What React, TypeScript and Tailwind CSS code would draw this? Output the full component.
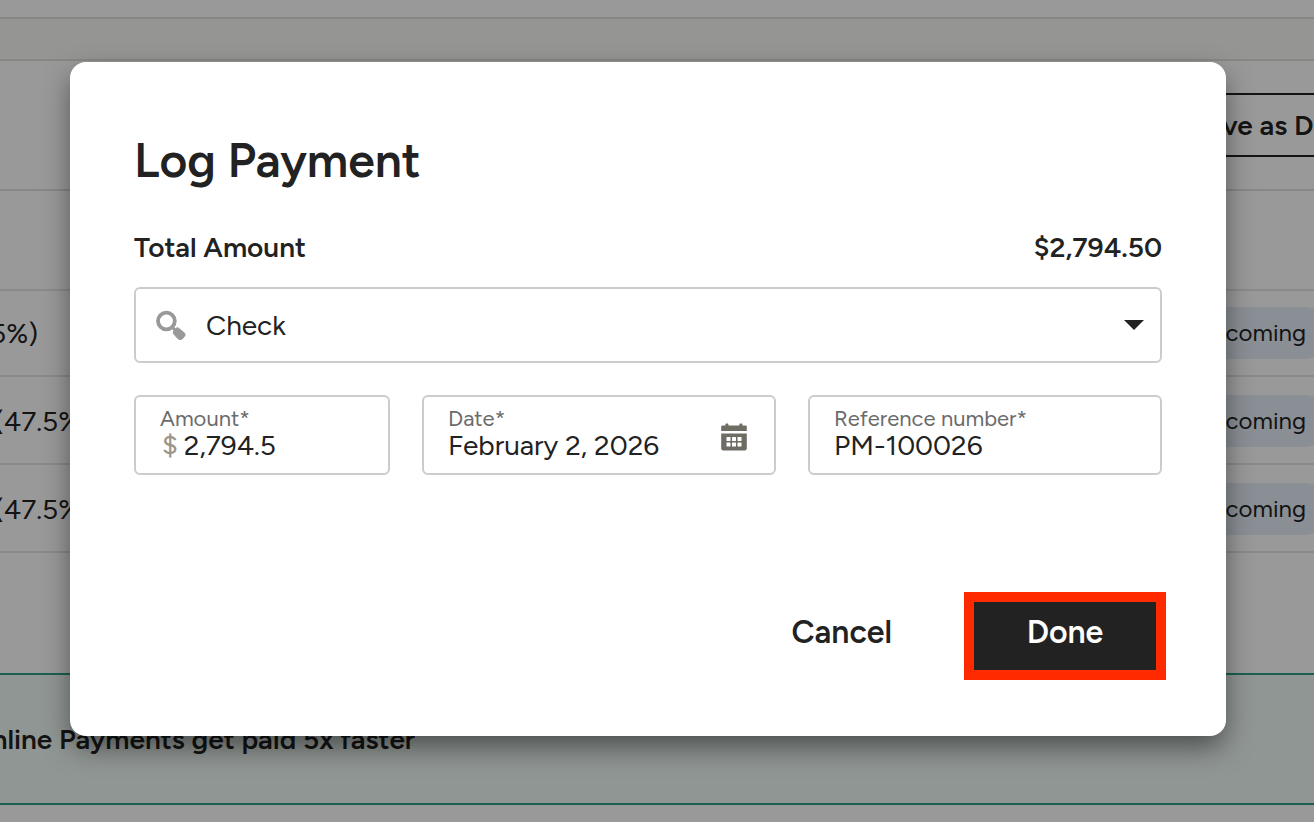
import type { ReactNode } from 'react';

const schedule = [
  { share: '(5%)', row: 'h-[86px]', cell: 'w-[38px]' },
  { share: '(47.5%)', row: 'h-[88px] pt-0.5', cell: 'w-[90px]' },
  { share: '(47.5%)', row: 'h-[88px] pt-0.5', cell: 'w-[90px]' },
];

function InvoicePage() {
  return (
    <div aria-hidden="true" className="flex h-full flex-col overflow-hidden bg-white text-[28px] leading-9 text-[#222222]">
      <div className="h-[19px] shrink-0 border-b-2 border-[#e2e1dd]" />
      <div className="h-[42px] shrink-0 border-b-2 border-[#e2e1dd] bg-[#f9f9f5]" />
      <div className="flex h-[130px] shrink-0 items-center justify-end border-b-2 border-[#e2e1dd]">
        <button type="button" tabIndex={-1} className="-mr-20 h-16 border-2 border-[#222222] px-8 font-semibold whitespace-nowrap">
          Save as Draft
        </button>
      </div>
      <div className="h-[100px] shrink-0 border-b-2 border-[#e6e6e3]" />
      {schedule.map(({ share, row, cell }, i) => (
        <div key={i} className={`flex shrink-0 items-center justify-between border-b-2 border-[#e6e6e3] ${row}`}>
          <span className={`flex justify-end ${cell}`}>{share}</span>
          <span className="-mr-4 flex h-[52px] items-center rounded-full bg-[#e7eef8] px-6 text-2xl">Upcoming</span>
        </div>
      ))}
      <div className="h-[120px] shrink-0" />
      <div className="flex h-[132px] shrink-0 items-center border-y-2 border-[#2f9f86] bg-[#f0fbf6] font-semibold">
        <span className="flex w-[415px] justify-end whitespace-nowrap">Online Payments get paid 5x faster</span>
      </div>
    </div>
  );
}

function Field({ id, label, value, prefix, icon }: { id: string; label: string; value: string; prefix?: string; icon?: ReactNode }) {
  return (
    <div className="flex h-20 items-center rounded-md border-2 border-[#cccccc] px-6">
      <div className="flex min-w-0 flex-1 flex-col pb-1">
        <label htmlFor={id} className="text-[22px] leading-6 text-[#6b6b6b]">{label}</label>
        <div className="flex h-7 items-center text-[28px] leading-7">
          {prefix && <span className="mr-1.5 pl-0.5 text-[#9b9587]">{prefix}</span>}
          <input id={id} defaultValue={value} className="h-9 w-full min-w-0 bg-transparent text-[#222222] outline-none" />
        </div>
      </div>
      {icon}
    </div>
  );
}

function SearchIcon() {
  return (
    <svg viewBox="0 0 32 32" className="pointer-events-none absolute left-5 h-8 w-8" aria-hidden="true">
      <circle cx="12.4" cy="12" r="8.4" fill="none" stroke="#999999" strokeWidth="3.8" />
      <path d="M18 18L21.500 21.500" stroke="#999999" strokeWidth="3" />
      <path d="M19.400 22.200l3.400-3.400 1.500.2 6.400 5.200.3 2.400-2.800 3.400-2.200.6-2-.8-4.600-5.200z" fill="#999999" stroke="#999999" strokeLinejoin="round" />
    </svg>
  );
}

function CalendarIcon() {
  return (
    <svg viewBox="0 0 26 28" className="mt-1 mr-[3px] h-7 w-[26px] shrink-0" aria-hidden="true">
      <path fill="#6f6c64" d="M1.5 2.5H4.4V1.2Q4.4.4 5.2.4h1.4q.8 0 .8.8v1.3h11V1.2q0-.8.8-.8h1.4q.8 0 .8.8v1.3h3.1q1.3 0 1.3 1.3V8H.2V3.8q0-1.3 1.3-1.3z" />
      <path fill="#6f6c64" d="M.2 10.6h25.6v15q0 1.8-1.8 1.8H2Q.2 27.400.2 25.600z" />
      <g fill="#ffffff">
        <rect x="5.500" y="14" width="4" height="4" rx=".5" />
        <rect x="11" y="14" width="4" height="4" rx=".5" />
        <rect x="16.500" y="14" width="4" height="4" rx=".5" />
        <rect x="5.500" y="19.500" width="4" height="4" rx=".5" />
        <rect x="11" y="19.500" width="4" height="4" rx=".5" />
        <rect x="16.500" y="19.500" width="4" height="4" rx=".5" />
      </g>
    </svg>
  );
}

export default function App() {
  return (
    <div className="relative h-screen overflow-hidden font-['Figtree','Lato',sans-serif]">
      <InvoicePage />
      <div className="absolute inset-0 bg-black/40 pt-[62px] pr-[88px] pl-[70px]">
        <section
          role="dialog"
          aria-modal="true"
          aria-labelledby="dialog-title"
          className="rounded-2xl bg-white px-16 pt-[70px] pb-14 text-[#222222] shadow-[0_12px_28px_-2px_rgba(0,0,0,0.5)]"
        >
          <h1 id="dialog-title" className="text-5xl leading-[56px] font-semibold">Log Payment</h1>
          <div className="mt-[41px] flex justify-between text-[28px] leading-9 font-semibold">
            <span>Total Amount</span>
            <span>$2,794.50</span>
          </div>
          <form onSubmit={(e) => e.preventDefault()}>
            <div className="relative mt-[22px] flex items-center">
              <SearchIcon />
              <select aria-label="Payment method" className="h-[76px] w-full appearance-none rounded-md border-2 border-[#cccccc] bg-transparent pr-14 pl-[70px] text-[28px]">
                <option>Check</option>
              </select>
              <svg viewBox="0 0 20 10" className="pointer-events-none absolute right-[18px] h-2.5 w-5" aria-hidden="true">
                <path d="M0 0h20L10 10z" fill="#222222" />
              </svg>
            </div>
            <div className="mt-8 grid grid-cols-[256px_1fr_1fr] gap-8">
              <Field id="amount" label="Amount*" value="2,794.5" prefix="$" />
              <Field id="date" label="Date*" value="February 2, 2026" icon={<CalendarIcon />} />
              <Field id="reference" label="Reference number*" value="PM-100026" />
            </div>
            <div className="-mr-1 mt-[117px] flex items-center justify-end gap-[72px] text-[32px] font-semibold">
              <button type="button" className="pb-2">Cancel</button>
              <button type="submit" className="h-[88px] w-[202px] border-[10px] border-[#ff2a00] bg-[#222222] pb-2 text-white">Done</button>
            </div>
          </form>
        </section>
      </div>
    </div>
  );
}
